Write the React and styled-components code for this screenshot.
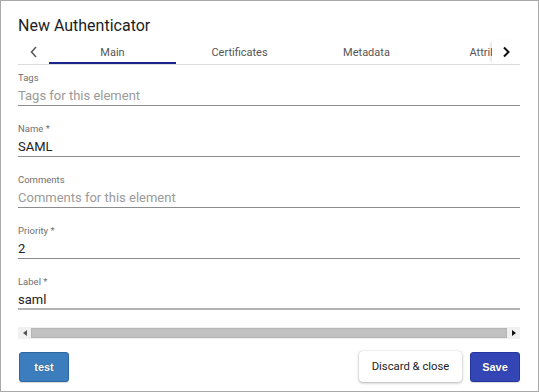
import React from "react";
import styled, { createGlobalStyle } from "styled-components";

const Global = createGlobalStyle`
  html, body { margin: 0; padding: 0; background: #ffffff; }
  * { box-sizing: border-box; }
  body { font-family: Roboto, "Noto Sans", Arial, sans-serif; }
`;

const Dialog = styled.div`
  width: 539px;
  height: 392px;
  border: 1px solid #a9a9a9;
  background: #fff;
  padding: 15px 18px 9px 17px;
  display: flex;
  flex-direction: column;
`;

const Title = styled.h1`
  margin: 0 0 4px 0;
  font-family: Roboto, sans-serif;
  font-weight: 400;
  font-size: 16px;
  line-height: 20px;
  color: #1d1d1d;
`;

const TabBar = styled.div`
  display: flex;
  height: 25px;
  border-bottom: 1px solid #dcdcdc;
`;

const Arrow = styled.button`
  flex: 0 0 ${(p) => p.$w}px;
  border: 0;
  background: transparent;
  padding: 0;
  display: flex;
  align-items: center;
  justify-content: center;
  position: relative;
  ${(p) =>
    p.$shadow
      ? `box-shadow: -3px 0 3px -2px rgba(0,0,0,0.15);`
      : ""}
`;

const TabsViewport = styled.div`
  flex: 1;
  overflow: hidden;
  display: flex;
`;

const Tab = styled.div`
  flex: 0 0 127px;
  height: 24px;
  display: flex;
  align-items: center;
  justify-content: center;
  font-size: 11px;
  color: #555;
  border-bottom: 2px solid ${(p) => (p.$active ? "#1b238c" : "transparent")};
  margin-bottom: -1px;
  padding-top: 2px;
`;

const Fields = styled.div`
  padding-top: 7px;
  display: flex;
  flex-direction: column;
  gap: 17px;
`;

const Field = styled.div`
  display: flex;
  flex-direction: column;
`;

const Label = styled.label`
  font-size: 9.5px;
  line-height: 12px;
  color: #707070;
  margin-bottom: 1px;
`;

const Input = styled.div`
  height: 21px;
  font-size: 13px;
  line-height: 20px;
  color: ${(p) => (p.$placeholder ? "#9a9a9a" : "#222")};
  border-bottom: ${(p) => (p.$faint ? "2px solid #b4b4b4" : "1px solid #8c8c8c")};
  padding-top: 1px;
`;

const ScrollBar = styled.div`
  margin-top: 17px;
  height: 12px;
  display: flex;
  background: #f1f1f1;
`;

const ScrollBtn = styled.div`
  flex: 0 0 13px;
  display: flex;
  align-items: center;
  justify-content: center;
  background: #f1f1f1;
`;

const Thumb = styled.div`
  flex: 1;
  margin: 1px 0;
  background: #c1c1c1;
  border: 1px solid #b6b6b6;
`;

const Footer = styled.div`
  margin-top: auto;
  display: flex;
  align-items: center;
  gap: 8px;
  padding-left: 1px;
`;

const Spacer = styled.div`
  flex: 1;
`;

const SolidButton = styled.button`
  width: 50px;
  height: 30px;
  border-radius: 3px;
  border: 1px solid ${(p) => p.$border};
  background: ${(p) => p.$bg};
  color: #fff;
  font-family: "Liberation Sans", Arial, sans-serif;
  font-weight: 700;
  font-size: 11px;
  text-shadow: 0 0 1px rgba(0, 0, 0, 0.5);
  box-shadow: 0 1px 1px rgba(0, 0, 0, 0.15);
  padding: 0;
`;

const FlatButton = styled.button`
  width: 103px;
  height: 31px;
  border-radius: 4px;
  border: 0;
  background: #fff;
  color: #222;
  font-family: Roboto, sans-serif;
  font-size: 11.3px;
  box-shadow: 0 1px 3px rgba(0, 0, 0, 0.3), 0 0 1px rgba(0, 0, 0, 0.2);
  padding: 0;
`;

const ChevronLeft = () => (
  <svg width="10" height="12" viewBox="0 0 10 12">
    <path d="M7 1 L2.5 6 L7 11" fill="none" stroke="#555" strokeWidth="1.5" />
  </svg>
);

const ChevronRight = () => (
  <svg width="10" height="12" viewBox="0 0 10 12">
    <path d="M3 1.5 L7.5 6 L3 10.5" fill="none" stroke="#111" strokeWidth="2" />
  </svg>
);

const TriLeft = () => (
  <svg width="4" height="6" viewBox="0 0 4 6">
    <path d="M4 0 L0 3 L4 6 Z" fill="#555" />
  </svg>
);

const TriRight = () => (
  <svg width="4" height="6" viewBox="0 0 4 6">
    <path d="M0 0 L4 3 L0 6 Z" fill="#111" />
  </svg>
);

const fields = [
  { label: "Tags", value: "Tags for this element", placeholder: true },
  { label: "Name *", value: "SAML" },
  { label: "Comments", value: "Comments for this element", placeholder: true },
  { label: "Priority *", value: "2" },
  { label: "Label *", value: "saml", faint: true },
];

export default function App() {
  return (
    <>
      <Global />
      <Dialog>
        <Title>New Authenticator</Title>
        <TabBar>
          <Arrow $w={31}>
            <ChevronLeft />
          </Arrow>
          <TabsViewport>
            <Tab $active>Main</Tab>
            <Tab>Certificates</Tab>
            <Tab>Metadata</Tab>
            <Tab>Attributes</Tab>
          </TabsViewport>
          <Arrow $w={28} $shadow>
            <ChevronRight />
          </Arrow>
        </TabBar>
        <Fields>
          {fields.map((f) => (
            <Field key={f.label}>
              <Label>{f.label}</Label>
              <Input $placeholder={f.placeholder} $faint={f.faint}>
                {f.value}
              </Input>
            </Field>
          ))}
        </Fields>
        <ScrollBar>
          <ScrollBtn>
            <TriLeft />
          </ScrollBtn>
          <Thumb />
          <ScrollBtn>
            <TriRight />
          </ScrollBtn>
        </ScrollBar>
        <Footer>
          <SolidButton $bg="#3c7dbd" $border="#2b66a3">test</SolidButton>
          <Spacer />
          <FlatButton>Discard &amp; close</FlatButton>
          <SolidButton $bg="#3446b6" $border="#2536a0">Save</SolidButton>
        </Footer>
      </Dialog>
    </>
  );
}
